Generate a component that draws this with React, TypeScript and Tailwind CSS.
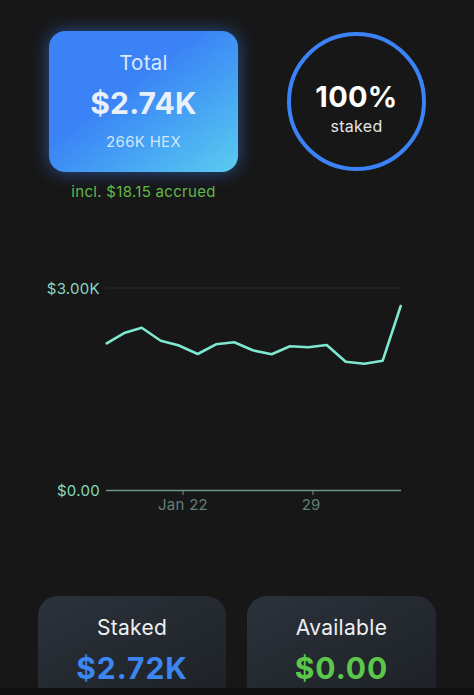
import React from "react";

const points: [number, number][] = [
  [106.7, 342.3],
  [125, 331.7],
  [141.7, 326.7],
  [160.7, 339.7],
  [178.3, 344.3],
  [197.7, 353],
  [216, 343.3],
  [234.3, 341.3],
  [252.7, 349.3],
  [271.7, 353.3],
  [290, 345.3],
  [308.3, 346.3],
  [326.7, 344],
  [345.7, 360.7],
  [364.3, 362.7],
  [382.7, 359.7],
  [400.7, 305],
];

// svg starts at page y = 270
const TOP = 270;
const FONT = "Inter, 'Liberation Sans', sans-serif";

const Chart: React.FC = () => {
  const d = points
    .map(([x, y], i) => `${i === 0 ? "M" : "L"}${x} ${(y - TOP).toFixed(1)}`)
    .join(" ");

  return (
    <svg width="474" height="250" viewBox="0 0 474 250" className="block">
      {/* grid line top */}
      <line x1="106" y1="17" x2="401" y2="17" stroke="#2c2c2c" strokeWidth="1" />
      <text x="100" y="22.5" textAnchor="end" fontSize="15" letterSpacing="0.3" fill="#86d9c0" fontFamily={FONT}>
        $3.00K
      </text>

      {/* x axis */}
      <line x1="106" y1="219.5" x2="401" y2="219.5" stroke="#6f948c" strokeWidth="1.5" />
      <line x1="183" y1="219" x2="183" y2="224" stroke="#6f948c" strokeWidth="1" />
      <line x1="313" y1="219" x2="313" y2="224" stroke="#6f948c" strokeWidth="1" />
      <text x="100" y="224.5" textAnchor="end" fontSize="15" letterSpacing="0.3" fill="#86d9c0" fontFamily={FONT}>
        $0.00
      </text>
      <text x="183" y="238.5" textAnchor="middle" fontSize="15" letterSpacing="0.3" fill="#5f7f79" fontFamily={FONT}>
        Jan 22
      </text>
      <text x="311" y="238.5" textAnchor="middle" fontSize="15" fill="#5f7f79" fontFamily={FONT}>
        29
      </text>

      <path d={d} fill="none" stroke="#7ee9d0" strokeWidth="2.6" strokeLinejoin="round" strokeLinecap="round" />
    </svg>
  );
};

export default function App() {
  return (
    <div
      className="w-[474px] h-[695px] overflow-hidden bg-[#171717] flex flex-col"
      style={{ fontFamily: FONT }}
    >
      {/* Top summary */}
      <div className="flex pt-[31px] pl-[49px]">
        <div className="flex flex-col items-center w-[189px]">
          <div className="w-[189px] h-[141px] rounded-[16px] bg-gradient-to-br from-[#3b82f6] from-40% to-[#5ccbee] shadow-[0_0_18px_rgba(59,130,246,0.55)] flex flex-col items-center">
            <div className="mt-[19px] text-[20.5px] leading-[26px] text-[#dce9fc] tracking-[0.3px]">Total</div>
            <div className="mt-[9px] text-[30px] leading-[36px] font-bold text-[#eaf0f9] tracking-[0.2px]">$2.74K</div>
            <div className="mt-[11px] text-[15px] leading-[20px] text-[#d3e5fa] tracking-[0.3px]">266K HEX</div>
          </div>
          <div className="mt-[10px] text-[15px] leading-[20px] text-[#62b94b] tracking-[0.3px]">incl. $18.15 accrued</div>
        </div>

        <div className="ml-[49px] mt-[1px] w-[139px] h-[139px] rounded-full border-[4px] border-[#3b82f6] flex flex-col items-center justify-center">
          <div className="mt-[12px] text-[29px] leading-[34px] font-bold text-white tracking-[0.3px]">100%</div>
          <div className="mt-[2px] text-[16px] leading-[20px] text-[#e6e6e6] tracking-[0.3px]">staked</div>
        </div>
      </div>

      {/* Chart */}
      <div className="mt-[69px]">
        <Chart />
      </div>

      {/* Bottom cards */}
      <div className="mt-[75px] flex pl-[38px] gap-[21px]">
        <div className="w-[188px] h-[92px] rounded-t-[20px] bg-gradient-to-br from-[#2c323b] to-[#1e2228] flex flex-col items-center">
          <div className="mt-[19px] text-[21px] leading-[26px] text-[#eef0f3] tracking-[0.3px]">Staked</div>
          <div className="mt-[9px] text-[30px] leading-[36px] font-bold text-[#3b86f0] tracking-[1px]">$2.72K</div>
        </div>
        <div className="w-[189px] h-[92px] rounded-t-[20px] bg-gradient-to-br from-[#2c323b] to-[#1e2228] flex flex-col items-center">
          <div className="mt-[19px] text-[21px] leading-[26px] text-[#eef0f3] tracking-[0.3px]">Available</div>
          <div className="mt-[9px] text-[30px] leading-[36px] font-bold text-[#5cc84a] tracking-[1px]">$0.00</div>
        </div>
      </div>
      <div className="h-[8px] bg-[#0f0f0f]" />
    </div>
  );
}
